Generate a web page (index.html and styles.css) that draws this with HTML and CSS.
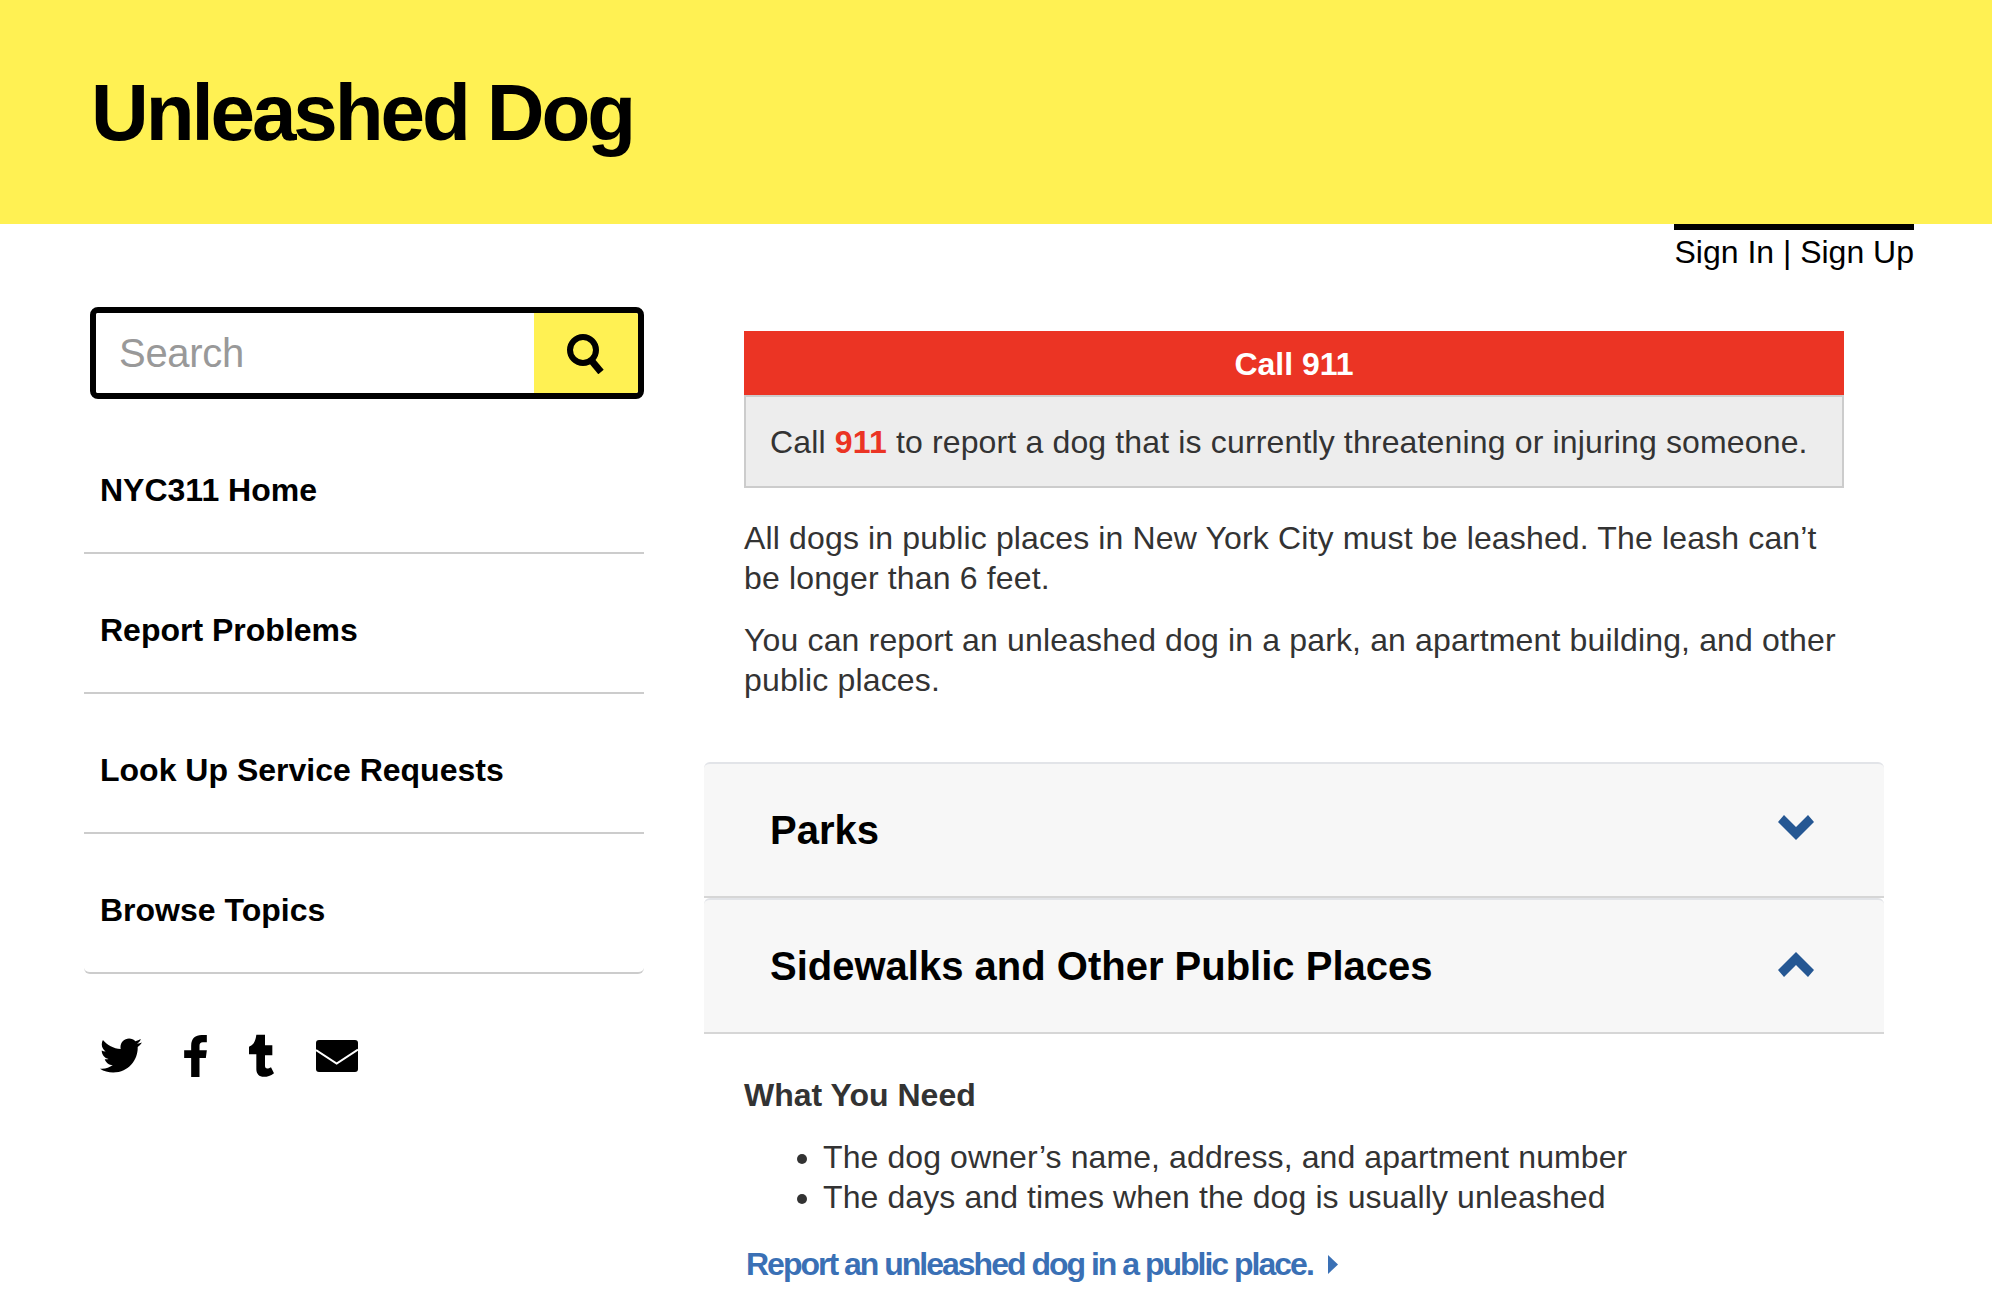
FILE: index.html
```html
<!DOCTYPE html>
<html lang="en">
<head>
  <meta charset="UTF-8">
  <title>Unleashed Dog</title>
  <link rel="stylesheet" href="styles.css">
</head>
<body>

<header class="banner">
  <h1>Unleashed Dog</h1>
</header>

<div class="account-row">
  <div class="account"><a href="#">Sign In</a> | <a href="#">Sign Up</a></div>
</div>

<div class="page">
  <aside class="sidebar">
    <form class="search">
      <input class="search-input" type="text" placeholder="Search">
      <button class="search-button" type="button" aria-label="Search">
        <svg width="40" height="40" viewBox="0 0 40 40">
          <circle cx="17" cy="16" r="13" fill="none" stroke="#000" stroke-width="6"/>
          <path d="M25 26 L35 38" fill="none" stroke="#000" stroke-width="7"/>
        </svg>
      </button>
    </form>

    <nav class="side-nav">
      <a href="#">NYC311 Home</a>
      <a href="#">Report Problems</a>
      <a href="#">Look Up Service Requests</a>
      <a href="#">Browse Topics</a>
    </nav>

    <div class="social">
      <svg width="42" height="35" viewBox="0 0 512 416"><path transform="translate(0 -48)" d="M459.37 151.716c.325 4.548.325 9.097.325 13.645 0 138.72-105.583 298.558-298.558 298.558-59.452 0-114.68-17.219-161.137-47.106 8.447.974 16.568 1.299 25.34 1.299 49.055 0 94.213-16.568 130.274-44.832-46.132-.975-84.792-31.188-98.112-72.772 6.498.974 12.995 1.624 19.818 1.624 9.421 0 18.843-1.3 27.614-3.573-48.081-9.747-84.143-51.98-84.143-102.985v-1.299c13.969 7.797 30.214 12.67 47.431 13.319-28.264-18.843-46.781-51.005-46.781-87.391 0-19.492 5.197-37.36 14.294-52.954 51.655 63.675 129.3 105.258 216.365 109.807-1.624-7.797-2.599-15.918-2.599-24.04 0-57.828 46.782-104.934 104.934-104.934 30.213 0 57.502 12.67 76.67 33.137 23.715-4.548 46.456-13.32 66.599-25.34-7.798 24.366-24.366 44.833-46.132 57.827 21.117-2.273 41.584-8.122 60.426-16.243-14.292 20.791-32.161 39.308-52.628 54.253z"/></svg>
      <svg width="23" height="42" viewBox="0 0 68 126"><path d="M21 126 V69 H0 V46 H21 V32 C21 10 34 0 52 0 H68 V22 H56 C49 22 46 26 46 33 V46 H68 L65 69 H46 V126 Z"/></svg>
      <svg width="25" height="43" viewBox="0 0 75 128"><path d="M22 2 H48 V33 H70 V63 H48 V95 C48 102 52 104 60 102 L66 99 L75 117 C65 125 55 128 45 128 C30 128 22 118 22 105 V60 H0 V38 C14 33 20 20 22 2 Z"/></svg>
      <svg width="42" height="32" viewBox="0 0 126 96"><rect width="126" height="96" rx="9"/><path d="M0 30 L62 71 L126 29" fill="none" stroke="#fff" stroke-width="6"/></svg>
    </div>
  </aside>

  <main class="content">
    <section class="alert">
      <div class="alert-title">Call 911</div>
      <div class="alert-body">Call <strong>911</strong> to report a dog that is currently threatening or injuring someone.</div>
    </section>

    <div class="intro">
      <p>All dogs in public places in New York City must be leashed. The leash can’t be longer than 6 feet.</p>
      <p>You can report an unleashed dog in a park, an apartment building, and other public places.</p>
    </div>

    <div class="accordion">
      <div class="accordion-head">
        <h2>Parks</h2>
        <svg class="chevron" width="36" height="25" viewBox="0 0 36 25"><path d="M6 0 L18 12 L30 0 L36 7 L18 25 L0 7 Z"/></svg>
      </div>
      <div class="accordion-head">
        <h2>Sidewalks and Other Public Places</h2>
        <svg class="chevron chevron-up" width="36" height="25" viewBox="0 0 36 25"><path d="M6 25 L18 13 L30 25 L36 18 L18 0 L0 18 Z"/></svg>
      </div>
      <div class="accordion-body">
        <h3>What You Need</h3>
        <ul>
          <li>The dog owner’s name, address, and apartment number</li>
          <li>The days and times when the dog is usually unleashed</li>
        </ul>
        <a class="action-link" href="#">Report an unleashed dog in a public place.<svg width="10" height="19" viewBox="0 0 10 19"><path d="M0 0 L10 9.5 L0 19 Z"/></svg></a>
      </div>
    </div>
  </main>
</div>

</body>
</html>
```

FILE: styles.css
```css
body {
  margin: 0;
  background: white;
  color: #333;
  font-family: "Liberation Sans", Arial, sans-serif;
  font-size: 32px;
  line-height: 40px;
}

a {
  color: inherit;
  text-decoration: none;
}

.banner {
  height: 224px;
  background: #fff153;
  box-sizing: border-box;
  padding: 71px 0 0 91px;
}

.banner h1 {
  margin: 0;
  color: black;
  font-size: 80px;
  line-height: 84px;
  letter-spacing: -3.1px;
}

.account-row {
  display: flex;
  justify-content: flex-end;
  height: 83px;
  padding-right: 78px;
}

.account {
  align-self: flex-start;
  padding-top: 2px;
  border-top: 6px solid black;
  color: black;
}

.page {
  display: grid;
  grid-template-columns: 560px 1180px;
  column-gap: 60px;
  padding-left: 84px;
}

.search {
  display: flex;
  height: 92px;
  margin-left: 6px;
  box-sizing: border-box;
  border: 6px solid black;
  border-radius: 8px;
  overflow: hidden;
}

.search-input {
  flex: 1;
  min-width: 0;
  border: none;
  outline: none;
  padding: 0 0 0 23px;
  font: 40px "Liberation Sans", Arial, sans-serif;
  letter-spacing: -0.3px;
  color: #333;
}

.search-input::placeholder {
  color: #999;
  opacity: 1;
}

.search-button {
  display: flex;
  align-items: center;
  justify-content: center;
  width: 104px;
  padding: 2px 0 0;
  border: none;
  background: #fff153;
}

.side-nav {
  display: flex;
  flex-direction: column;
  margin-top: 15px;
}

.side-nav a {
  height: 140px;
  box-sizing: border-box;
  padding: 56px 0 0 16px;
  border-bottom: 2px solid #ccc;
  color: black;
  font-weight: bold;
}

.side-nav a:last-child {
  border-bottom-left-radius: 6px;
  border-bottom-right-radius: 6px;
}

.social {
  display: flex;
  align-items: center;
  gap: 42px;
  margin-top: 60px;
  padding-left: 16px;
}

.content {
  margin-top: 24px;
}

.alert {
  margin: 0 40px;
}

.alert-title {
  height: 64px;
  background: #eb3424;
  color: white;
  font-weight: bold;
  line-height: 66px;
  text-align: center;
}

.alert-body {
  height: 93px;
  box-sizing: border-box;
  padding: 25px 24px 0;
  background: #ededed;
  border: 2px solid #ccc;
  letter-spacing: 0.15px;
}

.alert-body strong {
  color: #eb3424;
}

.intro {
  margin: 30px 40px 0;
  letter-spacing: 0.15px;
}

.intro p {
  margin: 0 0 22px;
}

.accordion {
  margin-top: 62px;
}

.accordion-head {
  display: flex;
  align-items: center;
  justify-content: space-between;
  height: 136px;
  box-sizing: border-box;
  padding: 0 70px 0 66px;
  background: #f7f7f7;
  border-top: 2px solid #e2e4e8;
  border-bottom: 2px solid #d6d6d6;
  border-radius: 6px 6px 0 0;
}

.accordion-head h2 {
  margin: 0;
  color: black;
  font-size: 40px;
  line-height: 48px;
}

.chevron {
  fill: #255793;
  margin-bottom: 6px;
}

.chevron-up {
  margin-bottom: 4px;
}

.accordion-body {
  padding: 41px 40px 0;
}

.accordion-body h3 {
  margin: 0 0 22px;
  font-size: 32px;
}

.accordion-body ul {
  margin: 0 0 27px;
  padding-left: 79px;
  letter-spacing: 0.1px;
}

.action-link {
  display: inline-flex;
  align-items: center;
  gap: 15px;
  margin-left: 2px;
  color: #3a70b5;
  font-weight: bold;
  letter-spacing: -2px;
}

.action-link svg {
  fill: #3a70b5;
}
```
